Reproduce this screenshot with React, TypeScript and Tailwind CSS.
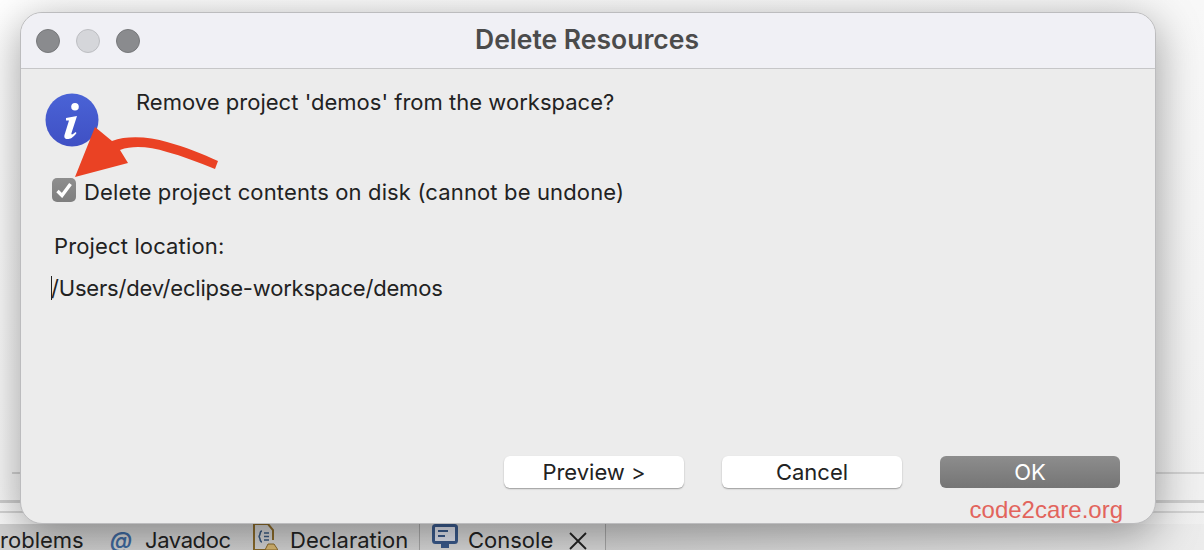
const font = "font-['Inter','Liberation_Sans',sans-serif]";

function Arrow() {
  return (
    <svg className="absolute left-0 top-0 z-20" width="240" height="200" viewBox="0 0 240 200">
      <path d="M75 177 L95 127 L112 141 C128 135 150 137 167 142 C185 147 203 154 218 161 L215 169 C198 162 182 156 167 152 C150 147 134 145 120 150 L128 163 Z" fill="#ea4224" />
    </svg>
  );
}

function InfoIcon() {
  return (
    <svg width="54" height="54" viewBox="0 0 54 54">
      <defs>
        <linearGradient id="ig" x1="0" y1="0" x2="0" y2="1">
          <stop offset="0" stopColor="#4a63d6" />
          <stop offset="1" stopColor="#3f50c4" />
        </linearGradient>
      </defs>
      <circle cx="27" cy="27" r="26.5" fill="url(#ig)" />
      <circle cx="30" cy="13.7" r="3.8" fill="#fff" />
      <path d="M21 25 L32 23 L26.5 40 C26 42 27.5 42 30.5 39 L31.5 40 C28 45 25 46 22.5 46 C19.5 46 19 44 19.5 42 L24 27.5 L21 27.5 Z" fill="#fff" />
    </svg>
  );
}

function Btn({ label, primary }: { label: string; primary?: boolean }) {
  return (
    <button
      className={
        primary
          ? "h-[32px] w-[180px] rounded-[6px] bg-gradient-to-b from-[#8d8d8d] to-[#757575] text-[22px] text-white"
          : "h-[32px] w-[180px] rounded-[6px] bg-white text-[22px] text-[#222] shadow-[0_1px_1.5px_rgba(0,0,0,0.35)]"
      }
    >
      {label}
    </button>
  );
}

export default function App() {
  return (
    <div className={`${font} relative h-[550px] w-[1204px] overflow-hidden bg-gradient-to-br from-[#ffffff] via-[#f8f8f8] to-[#f0f0f0]`}>
      {/* window content showing behind the dialog */}
      <div className="absolute left-[12px] right-0 top-[472px] h-[2px] bg-[#d4d4d4]" />
      <div className="absolute left-0 right-0 top-[500px] h-[3px] bg-[#cfcfcf]" />
      <div className="absolute left-0 right-0 top-[511px] h-[2px] bg-[#d4d4d4]" />
      <div className="absolute bottom-0 left-0 right-0 flex h-[26px] items-end bg-gradient-to-r from-[#d2d2d2] via-[#d6d6d6] to-[#ececec] text-[22px] leading-[26px] text-[#222]">
        <div className="flex h-[26px] items-center overflow-hidden">
          <span className="ml-[-14px] w-[124px] shrink-0 pt-[6px]">Problems</span>
          <span className="w-[21px] shrink-0 pt-[6px] text-[22px] font-semibold italic text-[#3f6aa0]">@</span>
          <span className="ml-[14px] w-[108px] shrink-0 pt-[6px] tracking-[-0.4px]">Javadoc</span>
          <svg className="h-[26px] w-[25px] shrink-0" viewBox="0 0 25 26">
            <path d="M1 0 V26 H14 M1 0 H15 L20 6 V16" fill="none" stroke="#8a6a2a" strokeWidth="2" />
            <path d="M9 7 C6 7 8 12 5.5 12.5 C8 13 6 18 9 18" fill="none" stroke="#3a5a80" strokeWidth="1.6" />
            <path d="M11 9 H16 M11 12.5 H16 M11 16 H16" stroke="#3a5a80" strokeWidth="1.6" />
            <path d="M12 26 L15 20 H21 L25 26 Z" fill="#d9b872" stroke="#8a6a2a" />
          </svg>
          <span className="ml-[12px] w-[129px] shrink-0 pt-[6px]">Declaration</span>
          <div className="flex h-[26px] w-[187px] shrink-0 items-center border-x border-[#a8a8a8] bg-white/10 pl-[12px]">
            <svg className="mt-[-2px] h-[24px] w-[26px] shrink-0" viewBox="0 0 26 24">
              <rect x="1.5" y="1.5" width="23" height="17" rx="2" fill="#dfe2ec" stroke="#3a5a8c" strokeWidth="3" />
              <path d="M6 7 H16 M6 12 H13" stroke="#3a5a8c" strokeWidth="2" />
              <rect x="9" y="19" width="8" height="5" fill="#3a5a8c" />
            </svg>
            <span className="ml-[10px] w-[100px] shrink-0 pt-[6px]">Console</span>
            <svg className="mt-[7px] h-[18px] w-[20px] shrink-0" viewBox="0 0 20 18">
              <path d="M2 1 L18 17 M18 1 L2 17" stroke="#222" strokeWidth="1.8" />
            </svg>
          </div>
        </div>
      </div>

      {/* dialog */}
      <div className="relative z-10 ml-[20px] mt-[12px] flex h-[512px] w-[1136px] flex-col rounded-[22px] border border-[#bcbcbe] bg-[#ececec] shadow-[0_10px_45px_rgba(0,0,0,0.38)]">
        <div className="flex h-[56px] shrink-0 items-center rounded-t-[21px] border-b border-[#c6c6c8] bg-[#f0f0f5] pl-[15px]">
          <div className="flex gap-[16px]">
            <span className="h-[24px] w-[24px] rounded-full border border-[#77787b] bg-[#8a8b8e]" />
            <span className="h-[24px] w-[24px] rounded-full border border-[#bdbec2] bg-[#d5d6da]" />
            <span className="h-[24px] w-[24px] rounded-full border border-[#77787b] bg-[#8a8b8e]" />
          </div>
          <h1 className="ml-[335px] mt-[-2px] text-[26.5px] font-semibold leading-none text-[#4b4b4b]">Delete Resources</h1>
        </div>
        <div className="flex flex-1 flex-col text-[22px] text-[#222]">
          <div className="flex h-[109px] items-start pl-[24px] pt-[24px]">
            <InfoIcon />
            <p className="ml-[37px] mt-[-4px] leading-[26px] tracking-[0.02px]">Remove project 'demos' from the workspace?</p>
          </div>
          <label className="flex h-[24px] items-center pl-[31px]">
            <span className="flex h-[24px] w-[24px] items-center justify-center rounded-[5px] bg-gradient-to-b from-[#8e8e8e] to-[#7f7f7f]">
              <svg width="18" height="16" viewBox="0 0 18 16">
                <path d="M2.5 9 L7 13.5 L15.5 2" fill="none" stroke="#fff" strokeWidth="3.4" />
              </svg>
            </span>
            <span className="ml-[8px] mt-[4px] leading-[26px] tracking-[0.14px]">Delete project contents on disk (cannot be undone)</span>
          </label>
          <p className="ml-[33px] mt-[31px] leading-[26px] tracking-[0.14px]">Project location:</p>
          <div className="ml-[30px] mt-[16px] flex items-center leading-[26px]">
            <span className="h-[24px] w-px bg-[#222]" />
            <span className="ml-[-1px] tracking-[-0.2px]">/Users/dev/eclipse-workspace/demos</span>
          </div>
          <div className="mt-auto flex justify-end gap-[38px] pr-[35px]">
            <Btn label="Preview >" />
            <Btn label="Cancel" />
            <Btn label="OK" primary />
          </div>
          <div className="flex h-[35px] justify-end pr-[32px] pt-[9px] text-[24px] leading-[26px] text-[#e2645c]">
            <span className="font-['Liberation_Sans',sans-serif]">code2care.org</span>
          </div>
        </div>
      </div>
      <Arrow />
    </div>
  );
}
